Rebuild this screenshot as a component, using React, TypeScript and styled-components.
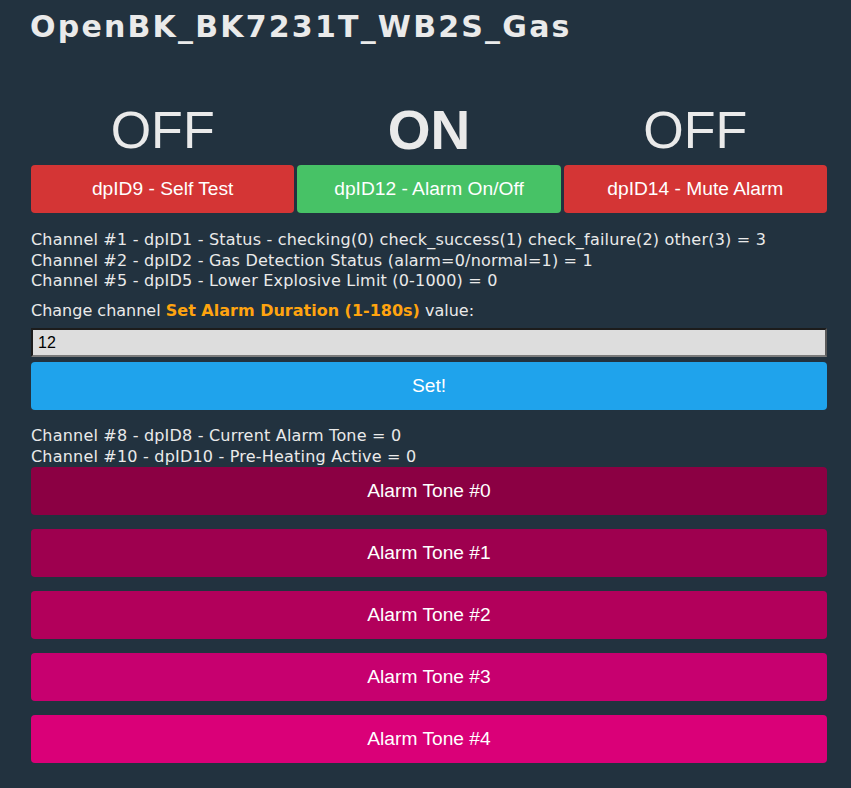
import React from 'react'
import styled, { createGlobalStyle } from 'styled-components'

const GlobalStyle = createGlobalStyle`
	html, body {
		margin: 0;
		padding: 0;
		background: #22323f;
		color: #eaeaea;
		font-family: 'DejaVu Sans', Verdana, sans-serif;
	}
`

const Page = styled.div`
	padding: 9px 24px 24px 31px;
`

const Title = styled.h1`
	margin: 0 0 0 -1px;
	font-family: 'DejaVu Sans', Verdana, sans-serif;
	font-weight: bold;
	font-size: 30px;
	letter-spacing: 2.2px;
	line-height: 36px;
`

const Toggles = styled.div`
	display: grid;
	grid-template-columns: repeat(3, 1fr);
	column-gap: 3px;
	margin-top: 55px;
`

const StateLabel = styled.div<{ $on?: boolean }>`
	text-align: center;
	font-family: 'Liberation Sans', Arial, sans-serif;
	font-size: ${(p) => (p.$on ? 55 : 52)}px;
	line-height: 60px;
	font-weight: ${(p) => (p.$on ? 'bold' : 'normal')};
	margin-bottom: 5px;
`

const Button = styled.button<{ $bg: string }>`
	display: block;
	width: 100%;
	height: 48px;
	border: 0;
	border-radius: 4px;
	background: ${(p) => p.$bg};
	color: #fff;
	font-family: 'Liberation Sans', Arial, sans-serif;
	font-size: 19.2px;
	padding: 0;
	cursor: pointer;
`

const Lines = styled.div<{ $top: number }>`
	margin-top: ${(p) => p.$top}px;
	font-size: 16px;
	letter-spacing: 0.2px;
	line-height: 20.5px;
`

const Prompt = styled.div`
	margin-top: 9px;
	font-size: 16px;
	line-height: 20.5px;
	b {
		color: #ffa40f;
	}
`

const Field = styled.input`
	display: block;
	box-sizing: border-box;
	width: 100%;
	height: 29px;
	margin: 7px 0 5px;
	padding: 0 5px;
	background: #dddddd;
	color: #000;
	border: 2px solid #1c1c1c;
	border-bottom-color: #7a7a7a;
	border-right-color: #5a5a5a;
	font-family: 'Liberation Sans', Arial, sans-serif;
	font-size: 16px;
	outline: none;
`

const Tones = styled.div`
	display: flex;
	flex-direction: column;
	gap: 14px;
	margin-top: 0;
`

const toggles = [
	{ state: 'OFF', on: false, label: 'dpID9 - Self Test', bg: '#d43535' },
	{ state: 'ON', on: true, label: 'dpID12 - Alarm On/Off', bg: '#47c266' },
	{ state: 'OFF', on: false, label: 'dpID14 - Mute Alarm', bg: '#d43535' },
]

const toneColors = ['#8b0043', '#9e004f', '#b2005b', '#c7006f', '#da0078']

export default function App() {
	return (
		<Page>
			<GlobalStyle />
			<Title>OpenBK_BK7231T_WB2S_Gas</Title>
			<Toggles>
				{toggles.map((t, i) => (
					<div key={i}>
						<StateLabel $on={t.on}>{t.state}</StateLabel>
						<Button $bg={t.bg}>{t.label}</Button>
					</div>
				))}
			</Toggles>
			<Lines $top={17}>
				<div>Channel #1 - dpID1 - Status - checking(0) check_success(1) check_failure(2) other(3) = 3</div>
				<div>Channel #2 - dpID2 - Gas Detection Status (alarm=0/normal=1) = 1</div>
				<div>Channel #5 - dpID5 - Lower Explosive Limit (0-1000) = 0</div>
			</Lines>
			<Prompt>
				Change channel <b>Set Alarm Duration (1-180s)</b> value:
			</Prompt>
			<Field defaultValue="12" />
			<Button $bg="#1fa3ec">Set!</Button>
			<Lines $top={16}>
				<div>Channel #8 - dpID8 - Current Alarm Tone = 0</div>
				<div>Channel #10 - dpID10 - Pre-Heating Active = 0</div>
			</Lines>
			<Tones>
				{toneColors.map((c, i) => (
					<Button key={i} $bg={c}>
						Alarm Tone #{i}
					</Button>
				))}
			</Tones>
		</Page>
	)
}
